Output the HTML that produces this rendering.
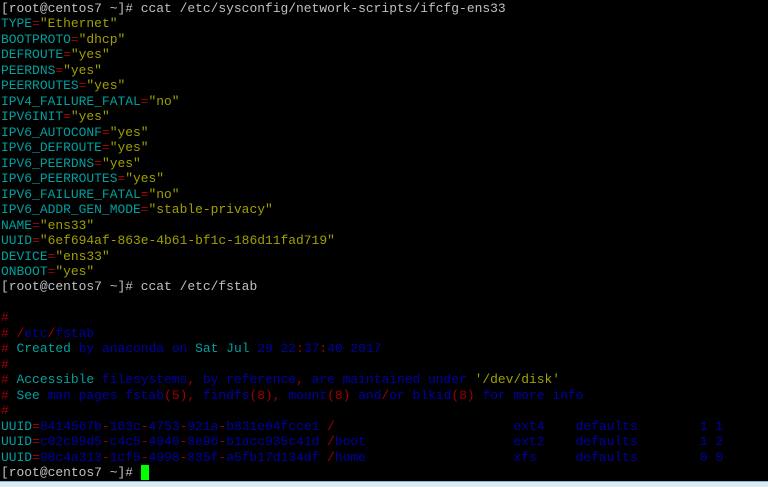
<!DOCTYPE html>
<html><head><meta charset="utf-8"><style>
html,body{margin:0;padding:0;background:#000;width:768px;height:486px;overflow:hidden}
pre{margin:0;padding:0 0 0 1px;position:absolute;top:1px;left:0;font-family:"Liberation Mono",monospace;font-size:12.95px;line-height:15.47px;color:#c0c0c0;white-space:pre}
.c{color:#00a0a0}.r{color:#a00000}.y{color:#a0a000}.b{color:#0000a8}
.cur{background:#00ff00;color:#00ff00}
.bot{position:absolute;left:0;top:481px;width:768px;height:5px;background:#dfe9f0;border-top:1px solid #7ab8e0}
</style></head><body>
<pre>[root@centos7 ~]# ccat /etc/sysconfig/network-scripts/ifcfg-ens33
<span class="c">TYPE</span><span class="r">=</span><span class="y">"Ethernet"</span>
<span class="c">BOOTPROTO</span><span class="r">=</span><span class="y">"dhcp"</span>
<span class="c">DEFROUTE</span><span class="r">=</span><span class="y">"yes"</span>
<span class="c">PEERDNS</span><span class="r">=</span><span class="y">"yes"</span>
<span class="c">PEERROUTES</span><span class="r">=</span><span class="y">"yes"</span>
<span class="c">IPV4_FAILURE_FATAL</span><span class="r">=</span><span class="y">"no"</span>
<span class="c">IPV6INIT</span><span class="r">=</span><span class="y">"yes"</span>
<span class="c">IPV6_AUTOCONF</span><span class="r">=</span><span class="y">"yes"</span>
<span class="c">IPV6_DEFROUTE</span><span class="r">=</span><span class="y">"yes"</span>
<span class="c">IPV6_PEERDNS</span><span class="r">=</span><span class="y">"yes"</span>
<span class="c">IPV6_PEERROUTES</span><span class="r">=</span><span class="y">"yes"</span>
<span class="c">IPV6_FAILURE_FATAL</span><span class="r">=</span><span class="y">"no"</span>
<span class="c">IPV6_ADDR_GEN_MODE</span><span class="r">=</span><span class="y">"stable-privacy"</span>
<span class="c">NAME</span><span class="r">=</span><span class="y">"ens33"</span>
<span class="c">UUID</span><span class="r">=</span><span class="y">"6ef694af-863e-4b61-bf1c-186d11fad719"</span>
<span class="c">DEVICE</span><span class="r">=</span><span class="y">"ens33"</span>
<span class="c">ONBOOT</span><span class="r">=</span><span class="y">"yes"</span>
[root@centos7 ~]# ccat /etc/fstab

<span class="r">#</span>
<span class="r">#</span> <span class="r">/</span><span class="b">etc</span><span class="r">/</span><span class="b">fstab</span>
<span class="r">#</span> <span class="c">Created</span> <span class="b">by anaconda on</span> <span class="c">Sat Jul</span> <span class="b">29 22</span><span class="r">:</span><span class="b">37</span><span class="r">:</span><span class="b">40 2017</span>
<span class="r">#</span>
<span class="r">#</span> <span class="c">Accessible</span> <span class="b">filesystems</span><span class="r">,</span> <span class="b">by reference</span><span class="r">,</span> <span class="b">are maintained under</span> <span class="y">'/dev/disk'</span>
<span class="r">#</span> <span class="c">See</span> <span class="b">man pages fstab</span><span class="r">(5),</span> <span class="b">findfs</span><span class="r">(8),</span> <span class="b">mount</span><span class="r">(8)</span> <span class="b">and</span><span class="r">/</span><span class="b">or blkid</span><span class="r">(8)</span> <span class="b">for more info</span>
<span class="r">#</span>
<span class="c">UUID</span><span class="r">=</span><span class="b">8414567b</span><span class="r">-</span><span class="b">163c</span><span class="r">-</span><span class="b">4753</span><span class="r">-</span><span class="b">921a</span><span class="r">-</span><span class="b">b831e04fcce1</span> <span class="r">/</span><span class="b">                       ext4    defaults        1 1</span>
<span class="c">UUID</span><span class="r">=</span><span class="b">c02c99d5</span><span class="r">-</span><span class="b">c4c5</span><span class="r">-</span><span class="b">4940</span><span class="r">-</span><span class="b">8e96</span><span class="r">-</span><span class="b">b1acc935c41d</span> <span class="r">/</span><span class="b">boot                   ext2    defaults        1 2</span>
<span class="c">UUID</span><span class="r">=</span><span class="b">98c4a313</span><span class="r">-</span><span class="b">1cf5</span><span class="r">-</span><span class="b">4998</span><span class="r">-</span><span class="b">835f</span><span class="r">-</span><span class="b">a5fb17d134df</span> <span class="r">/</span><span class="b">home                   xfs     defaults        0 0</span>
[root@centos7 ~]# <span class="cur">_</span></pre>
<div class="bot"></div>
</body></html>
